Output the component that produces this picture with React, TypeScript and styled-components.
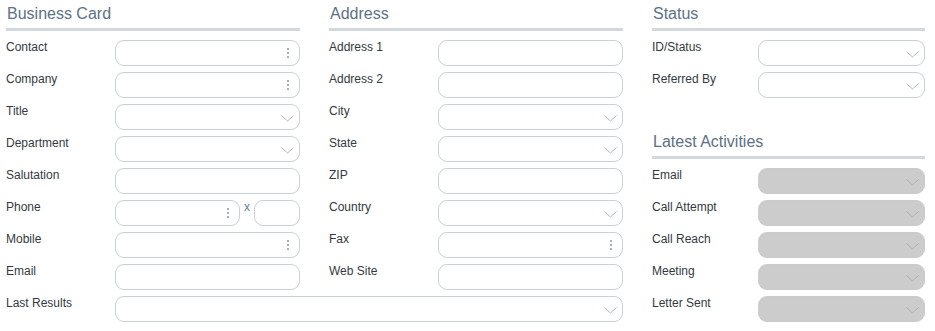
import React from "react";
import styled, { createGlobalStyle } from "styled-components";

const GlobalStyle = createGlobalStyle`
  body {
    margin: 0;
    background: #fff;
    font-family: "Liberation Sans", Arial, sans-serif;
  }
`;

type Kind = "text" | "select" | "dots";

const Page = styled.div`
  display: flex;
  gap: 29px;
  padding: 0 6px;
`;

const LeftGroup = styled.div`
  display: grid;
  grid-template-columns: 294px 294px;
  column-gap: 29px;
`;

const RightColumn = styled.div`
  width: 273px;
`;

const Section = styled.section<{ $top?: number }>`
  display: flex;
  flex-direction: column;
  gap: 6px;
  margin-top: ${(p) => p.$top || 0}px;
`;

const Header = styled.h2`
  margin: 0 0 3px;
  padding: 4px 1px 4px 1px;
  font-size: 16px;
  line-height: 20px;
  font-weight: normal;
  color: #5d7184;
  border-bottom: 3px solid #d2d8dd;
`;

const Row = styled.div<{ $label: number; $span?: boolean }>`
  display: grid;
  grid-template-columns: ${(p) => p.$label}px 1fr;
  align-items: start;
  height: 26px;
  grid-column: ${(p) => (p.$span ? "1 / span 2" : "auto")};
  margin-top: ${(p) => (p.$span ? 6 : 0)}px;
`;

const Label = styled.label`
  font-size: 12px;
  line-height: 14px;
  color: #333a42;
`;

const Box = styled.div<{ $disabled?: boolean }>`
  position: relative;
  box-sizing: border-box;
  height: 26px;
  border: 1px solid ${(p) => (p.$disabled ? "#c9cbcd" : "#c8d0d8")};
  border-radius: 9px;
  background: ${(p) => (p.$disabled ? "#cccccc" : "#fff")};
`;

const Dots = styled.span`
  position: absolute;
  right: 10px;
  top: 7px;
  display: flex;
  flex-direction: column;
  gap: 2px;
  & > i {
    display: block;
    width: 2px;
    height: 2px;
    border-radius: 1px;
    background: #8496a8;
  }
`;

const Chevron = styled.svg`
  position: absolute;
  right: 5px;
  top: 10px;
`;

const PhoneWrap = styled.div`
  display: grid;
  grid-template-columns: 125px 14px 1fr;
  align-items: start;
`;

const Times = styled.span`
  font-size: 12px;
  line-height: 14px;
  color: #6b7f93;
  text-align: center;
`;

const Field = ({ kind = "text", disabled }: { kind?: Kind; disabled?: boolean }) => (
  <Box $disabled={disabled}>
    {kind === "dots" && (
      <Dots>
        <i />
        <i />
        <i />
      </Dots>
    )}
    {kind === "select" && (
      <Chevron width="13" height="7" viewBox="0 0 13 7">
        <polyline
          points="0.5,0.5 6.5,6 12.5,0.5"
          fill="none"
          stroke={disabled ? "#a9b3bd" : "#aab5c0"}
          strokeWidth="1"
        />
      </Chevron>
    )}
  </Box>
);

const business: [string, Kind][] = [
  ["Contact", "dots"],
  ["Company", "dots"],
  ["Title", "select"],
  ["Department", "select"],
  ["Salutation", "text"],
];

const business2: [string, Kind][] = [
  ["Mobile", "dots"],
  ["Email", "text"],
];

const address: [string, Kind][] = [
  ["Address 1", "text"],
  ["Address 2", "text"],
  ["City", "select"],
  ["State", "select"],
  ["ZIP", "text"],
  ["Country", "select"],
  ["Fax", "dots"],
  ["Web Site", "text"],
];

const activities = ["Email", "Call Attempt", "Call Reach", "Meeting", "Letter Sent"];

export default function App() {
  return (
    <>
      <GlobalStyle />
      <Page>
        <LeftGroup>
          <Section>
            <Header>Business Card</Header>
            {business.map(([l, k]) => (
              <Row key={l} $label={109}>
                <Label>{l}</Label>
                <Field kind={k} />
              </Row>
            ))}
            <Row $label={109}>
              <Label>Phone</Label>
              <PhoneWrap>
                <Field kind="dots" />
                <Times>x</Times>
                <Field />
              </PhoneWrap>
            </Row>
            {business2.map(([l, k]) => (
              <Row key={l} $label={109}>
                <Label>{l}</Label>
                <Field kind={k} />
              </Row>
            ))}
          </Section>
          <Section>
            <Header>Address</Header>
            {address.map(([l, k]) => (
              <Row key={l} $label={109}>
                <Label>{l}</Label>
                <Field kind={k} />
              </Row>
            ))}
          </Section>
          <Row $label={109} $span>
            <Label>Last Results</Label>
            <Field kind="select" />
          </Row>
        </LeftGroup>
        <RightColumn>
          <Section>
            <Header>Status</Header>
            <Row $label={106}>
              <Label>ID/Status</Label>
              <Field kind="select" />
            </Row>
            <Row $label={106}>
              <Label>Referred By</Label>
              <Field kind="select" />
            </Row>
          </Section>
          <Section $top={30}>
            <Header>Latest Activities</Header>
            {activities.map((l) => (
              <Row key={l} $label={106}>
                <Label>{l}</Label>
                <Field kind="select" disabled />
              </Row>
            ))}
          </Section>
        </RightColumn>
      </Page>
    </>
  );
}
